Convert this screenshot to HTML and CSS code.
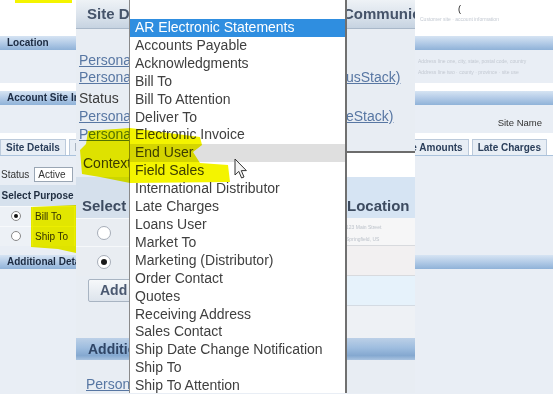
FILE: index.html
```html
<html>
    <head>
        <title>Site Details</title>
        <link rel="stylesheet" href="styles.css">
    </head>
    <body>
    <!-- the customer site page behind -->
    <div class="page">
        <div class="top">
            <div class="top_line"><span class="paren">(</span></div>
            <div class="faint">Customer site &middot; account information</div>
        </div>
        <div class="bar">Location</div>
        <div class="panel p1">
            <div class="faint">Address line one, city, state, postal code, country</div>
            <div class="faint">Address line two &middot; county &middot; province &middot; site use</div>
        </div>
        <div class="gap"></div>
        <div class="bar">Account Site Information</div>
        <div class="panel p2"><span class="site_name">Site Name</span></div>
        <div class="gap small"></div>
        <div class="tabs">
            <span class="tab">Site Details</span>
            <span class="tab">Business Purposes</span>
            <span class="tab">Communication</span>
            <span class="tab push">Profile Amounts</span>
            <span class="tab">Late Charges</span>
        </div>
        <div class="panel p3">
            <div class="status_row">Status <span class="select_box">Active</span></div>
            <table class="purposes">
                <tr><th class="c1">Select</th><th>Purpose</th><th>Location</th></tr>
                <tr><td class="c1"><span class="dot on"></span></td><td>Bill To</td><td></td></tr>
                <tr><td class="c1"><span class="dot"></span></td><td>Ship To</td><td></td></tr>
            </table>
        </div>
        <div class="bar">Additional Details</div>
        <div class="panel p4"></div>
    </div>

    <!-- highlighter on the page behind -->
    <svg class="marks" width="553" height="401">
        <rect x="15" y="0" width="57" height="3" fill="#f4f400"/>
        <polygon points="31,207 76,205 76,253 58,249 31,247" fill="#f4f400"/>
    </svg>

    <!-- zoomed in part of the page with the open list -->
    <div class="zoom">
        <div class="zhead">
            <div class="zl">Site Details</div>
            <div class="zr">Communication</div>
        </div>
        <div class="zbody">
            <div class="span"></div>

            <div class="zl"><a>Personalize Stack Layout: (SiteDetailsRN)</a></div>
            <div class="zr"></div>

            <div class="zl"><a>Personalize Stack Layout: (SiteStatusStack)</a></div>
            <div class="zr"><a>usStack)</a></div>

            <div class="zl status">Status</div>
            <div class="zr"></div>

            <div class="zl"><a>Personalize Stack Layout: (SiteUseStack)</a></div>
            <div class="zr"><a>eStack)</a></div>

            <div class="zl"><a>Personalize Flexfield: (Context)</a></div>
            <div class="zr"></div>

            <div class="zl"></div>
            <div class="zr rule"></div>

            <div class="zl context">Context</div>
            <div class="zr white"></div>

            <div class="zl th">Select</div>
            <div class="zr th loc">Location</div>

            <div class="zl td first"><span class="radio"></span></div>
            <div class="zr r1"><div class="tiny">123 Main Street</div><div class="tiny">Springfield, US</div></div>

            <div class="zl td"><span class="radio on"></span></div>
            <div class="zr r2"></div>

            <div class="zl"><span class="add_btn">Add Another Row</span></div>
            <div class="zr r3"></div>

            <div class="zl"></div>
            <div class="zr r4"></div>

            <div class="span zbar">Additional Details</div>

            <div class="zl last"><a>Personalize Stack Layout</a></div>
            <div class="zr"></div>
        </div>

        <div class="dropdown">
            <div class="item picked">AR Electronic Statements</div>
            <div class="item">Accounts Payable</div>
            <div class="item">Acknowledgments</div>
            <div class="item">Bill To</div>
            <div class="item">Bill To Attention</div>
            <div class="item">Deliver To</div>
            <div class="item">Electronic Invoice</div>
            <div class="item hover">End User</div>
            <div class="item">Field Sales</div>
            <div class="item">International Distributor</div>
            <div class="item">Late Charges</div>
            <div class="item">Loans User</div>
            <div class="item">Market To</div>
            <div class="item">Marketing (Distributor)</div>
            <div class="item">Order Contact</div>
            <div class="item">Quotes</div>
            <div class="item">Receiving Address</div>
            <div class="item">Sales Contact</div>
            <div class="item">Ship Date Change Notification</div>
            <div class="item">Ship To</div>
            <div class="item">Ship To Attention</div>
        </div>

        <svg class="zmark" width="339" height="393">
            <polygon points="12,131 54,128 124,137 126,145 117,152 124,163 152,165 154,182 54,183 24,177 6,174 4,150 10,144" fill="#f4f400"/>
        </svg>

        <svg class="cursor" width="14" height="22" viewBox="0 0 14 22">
            <path d="M1 1 L1 17 L4.8 13.4 L7.6 20 L10 19 L7.3 12.6 L12.4 12.6 Z" fill="#f4f4f4" stroke="#333" stroke-width="1" stroke-linejoin="round"/>
        </svg>
    </div>
    </body>
</html>
```

FILE: styles.css
```css
body{
    margin: 0;
    width: 553px;
    height: 401px;
    overflow: hidden;
    position: relative;
    background: #ffffff;
    font-family: "Liberation Sans", Arial, sans-serif;
    color: #333333;
}

/* page behind */
.page{
    width: 553px;
    filter: blur(0.3px);
}
.top{
    height: 36px;
    padding-left: 420px;
    box-sizing: border-box;
    padding-top: 4px;
}
.top_line{
    height: 10px;
    font-size: 9px;
    line-height: 10px;
}
.paren{
    margin-left: 38px;
    color: #111;
}
.faint{
    font-size: 5px;
    line-height: 11px;
    color: #c3c9d2;
    white-space: nowrap;
}
.bar{
    height: 14px;
    line-height: 14px;
    padding-left: 7px;
    font-size: 10px;
    font-weight: bold;
    color: #1c2b42;
    background: linear-gradient(#d6e4f3, #b3cbe7 50%, #8fb2d8);
    white-space: nowrap;
}
.panel{
    background: #e9eef5;
}
.p1{
    height: 33px;
    padding-left: 418px;
    padding-top: 6px;
    box-sizing: border-box;
}
.gap{
    height: 8px;
}
.gap.small{
    height: 6px;
}
.p2{
    height: 28px;
    box-sizing: border-box;
    padding-top: 12px;
    padding-right: 11px;
    text-align: right;
    font-size: 9.5px;
}
.tabs{
    display: flex;
    gap: 3px;
    height: 17px;
    padding-right: 6px;
    border-bottom: 1px solid #aac2dc;
    box-sizing: border-box;
    white-space: nowrap;
}
.tab{
    border: 1px solid #bccadb;
    border-bottom: none;
    background: #e8eef5;
    font-size: 10px;
    font-weight: bold;
    color: #2a3e5a;
    line-height: 15px;
    padding: 0 5px 0 5px;
}
.tab.push{
    margin-left: auto;
}
.p3{
    height: 99px;
    box-sizing: border-box;
    padding-top: 11px;
    font-size: 10px;
}
.status_row{
    display: flex;
    align-items: center;
    gap: 5px;
    height: 15px;
    padding-left: 1px;
}
.select_box{
    width: 39px;
    height: 15px;
    box-sizing: border-box;
    border: 1px solid #9aa6b4;
    background: #fff;
    padding-left: 3px;
    line-height: 13px;
}
.purposes{
    margin-top: 3px;
    border-collapse: collapse;
    font-size: 10px;
}
.purposes th{
    height: 21px;
    background: #d6e1ed;
    text-align: left;
    padding: 0 1px;
    color: #1f2d40;
}
.purposes td{
    height: 20px;
    border-top: 1px solid #f7f9fb;
    border-left: 1px solid #f7f9fb;
    padding: 0 2px;
    background: #edf1f6;
}
.purposes .c1{
    width: 28px;
    text-align: center;
    border-left: none;
}
.purposes td:last-child, .purposes th:last-child{
    width: 40px;
}
.dot{
    display: inline-block;
    width: 8px;
    height: 8px;
    border-radius: 50%;
    border: 1px solid #888;
    background: #fff;
    vertical-align: middle;
    position: relative;
}
.dot.on::after{
    content: "";
    position: absolute;
    left: 2px;
    top: 2px;
    width: 4px;
    height: 4px;
    border-radius: 50%;
    background: #111;
}
.p4{
    height: 125px;
}

.marks{
    position: absolute;
    left: 0;
    top: 0;
    mix-blend-mode: multiply;
}

/* zoomed window */
.zoom{
    position: absolute;
    left: 76px;
    top: 0;
    width: 339px;
    height: 393px;
    overflow: hidden;
    background: #e8edf3;
    font-size: 14px;
    color: #3c3c3c;
    filter: blur(0.35px);
}
.zhead{
    display: grid;
    grid-template-columns: 53px 214px 72px;
    height: 29px;
    box-sizing: border-box;
    border-bottom: 1px solid #a9b8c9;
    background: linear-gradient(#eef2f6, #dbe3ec 55%, #c6d3e1);
    font-size: 15px;
    font-weight: bold;
    color: #46546a;
    line-height: 28px;
    white-space: nowrap;
}
.zhead .zl{
    padding-left: 11px;
    overflow: hidden;
}
.zhead .zr{
    grid-column: 3;
    overflow: hidden;
}
.zbody{
    display: grid;
    grid-template-columns: 53px 214px 72px;
    grid-template-rows: 23px 17px 17px 22px 18px 18px 9px 24px 41px 28px 30px 30px 32px 22px 33px;
    line-height: 17px;
    white-space: nowrap;
}
.zbody .span{
    grid-column: 1 / -1;
}
.zbody .zl{
    grid-column: 1;
    padding-left: 3px;
    overflow: hidden;
}
.zbody .zr{
    grid-column: 3;
    overflow: hidden;
    padding-left: 3px;
}
.zbody a{
    color: #5877a3;
    text-decoration: underline;
}
.zbody .status{
    padding-top: 4px;
}
.zbody .context{
    padding-left: 7px;
    padding-top: 2px;
}
.zbody .rule{
    border-bottom: 2px solid #6c6c6c;
}
.zbody .white{
    background: #ffffff;
}
.zbody .th{
    padding-top: 20px;
    font-size: 15px;
    font-weight: bold;
    color: #3d4b60;
    background: #d5e0ec;
}
.zbody .zl.th{
    padding-left: 6px;
}
.zbody .loc{
    background: #d6e4f3;
    padding-left: 4px;
}
.zbody .td{
    background: #e9edf2;
    border-top: 1px solid #f6f8fa;
    display: flex;
    align-items: center;
    padding-left: 21px;
}
.radio{
    width: 12px;
    height: 12px;
    border-radius: 50%;
    border: 1px solid #a6adb8;
    background: #fff;
    position: relative;
}
.radio.on::after{
    content: "";
    position: absolute;
    left: 3px;
    top: 3px;
    width: 6px;
    height: 6px;
    border-radius: 50%;
    background: #1a1a1a;
}
.r1{
    background: #f6f6f7;
    padding-top: 3px;
    border-bottom: 1px solid #d8dade;
}
.tiny{
    font-size: 5px;
    line-height: 12px;
    color: #bcc2ca;
}
.r2{
    background: #f2f0f1;
    border-bottom: 1px solid #d8dade;
}
.r3{
    background: #e6f2fb;
    border-bottom: 1px solid #d4dbe3;
}
.r4{
    background: #eef1f5;
}
.add_btn{
    display: inline-block;
    margin-top: 3px;
    margin-left: 9px;
    height: 23px;
    box-sizing: border-box;
    padding: 0 11px;
    line-height: 21px;
    border: 1px solid #a8b4c2;
    border-radius: 2px;
    background: linear-gradient(#f6f8fa, #dde4ec);
    font-weight: bold;
    color: #4a5870;
}
.zbar{
    background: linear-gradient(#bcd0e7, #9ebddf 45%, #84a8d0 80%, #a9c3e0);
    font-weight: bold;
    color: #2f4566;
    line-height: 22px;
    padding-left: 12px;
}
.zbody .last{
    padding-top: 16px;
    padding-left: 10px;
}

/* open list */
.dropdown{
    position: absolute;
    left: 53px;
    top: 0;
    width: 215px;
    padding-top: 19px;
    background: #ffffff;
    border-left: 1px solid #8a8a8a;
    border-right: 2px solid #707070;
    font-size: 14px;
    line-height: 17.9px;
    color: #404040;
    white-space: nowrap;
}
.item{
    padding-left: 5px;
}
.item.picked{
    background: #2f8ee0;
    color: #ffffff;
}
.item.hover{
    background: #dfdfdf;
}
.zmark{
    position: absolute;
    left: 0;
    top: 0;
    mix-blend-mode: multiply;
}
.cursor{
    position: absolute;
    left: 158px;
    top: 158px;
}
```
